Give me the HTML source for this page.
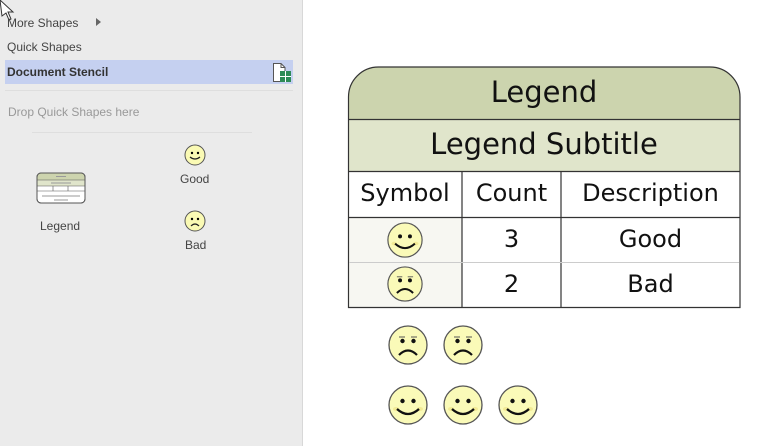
<!DOCTYPE html>
<html><head><meta charset="utf-8"><style>
*{margin:0;padding:0;box-sizing:border-box}
body{width:768px;height:446px;overflow:hidden;background:#fff;font-family:"Liberation Sans",sans-serif;position:relative}
#panel{position:absolute;left:0;top:0;width:303px;height:446px;background:#ebebeb;border-right:1px solid #d8d8d8}
.t{position:absolute;font-size:12px;color:#444;white-space:nowrap}
.abs{position:absolute}
.cell{position:absolute;font-family:"DejaVu Sans","Liberation Sans",sans-serif;color:#111;text-align:center;white-space:nowrap}
</style></head><body>
<div id="panel">
<svg class="abs" style="left:0;top:0" width="20" height="22"><path d="M0 0 L13 12 L8 12 L11 19 L9 20 L6 13 L2 16 Z" fill="#fff" stroke="#333" stroke-width="1"/></svg>
<div class="t" style="left:7px;top:16px">More Shapes</div>
<svg class="abs" style="left:95px;top:17px" width="8" height="10"><path d="M1 1 L6 5 L1 9Z" fill="#666"/></svg>
<div class="t" style="left:7px;top:40px">Quick Shapes</div>
<div class="abs" style="left:5px;top:60px;width:288px;height:24px;background:#c5d0f0"></div>
<div class="t" style="left:7px;top:65px;font-weight:bold;color:#333">Document Stencil</div>
<svg class="abs" style="left:272px;top:62px" width="20" height="21"><path d="M1.5 1.5 H9 L13 5.5 V19.5 H1.5Z" fill="#fff" stroke="#555"/><path d="M9 1.5 V5.5 H13" fill="none" stroke="#555"/><rect x="8" y="9" width="11" height="11" fill="#2e8b57"/><path d="M8 14.5H19M13.5 9V20" stroke="#fff"/></svg>
<div class="abs" style="left:5px;top:90px;width:288px;height:1px;background:#dedede"></div>
<div class="t" style="left:8px;top:105px;color:#999">Drop Quick Shapes here</div>
<div class="abs" style="left:32px;top:132px;width:220px;height:1px;background:#dedede"></div>
<svg class="abs" style="left:36px;top:172px" width="50" height="32"><rect x="1" y="1" width="48" height="30" rx="4" fill="#fff" stroke="#555"/><path d="M1 8 V5 a4 4 0 0 1 4-4 H45 a4 4 0 0 1 4 4 V8Z" fill="#cdd4ae"/><rect x="1" y="8" width="48" height="6" fill="#e0e5cb"/><path d="M1 8H49M1 14H49M1 19H49M17 14V19M32 14V19" stroke="#555" stroke-width=".6"/><rect x="1" y="1" width="48" height="30" rx="4" fill="none" stroke="#555"/><path d="M20 4.5H30M15 11H35M6 24H44M18 28H32" stroke="#999" stroke-width="1"/></svg>
<div class="t" style="left:40px;top:219px">Legend</div>
<svg class="abs" style="left:184px;top:144px" width="22" height="22"><circle cx="11" cy="11" r="10" fill="#fafab4" stroke="#555"/><circle cx="8" cy="9" r="1.2"/><circle cx="14" cy="9" r="1.2"/><path d="M6 13 Q11 17 16 13" fill="none" stroke="#222" stroke-width="1.2"/></svg>
<div class="t" style="left:180px;top:172px">Good</div>
<svg class="abs" style="left:184px;top:210px" width="22" height="22"><circle cx="11" cy="11" r="10" fill="#fafab4" stroke="#555"/><circle cx="8" cy="9" r="1.2"/><circle cx="14" cy="9" r="1.2"/><path d="M7 16 Q11 12 15 16" fill="none" stroke="#222" stroke-width="1.2"/></svg>
<div class="t" style="left:185px;top:238px">Bad</div>
</div>

<svg class="abs" style="left:0;top:0" width="768" height="446">
<defs>
<g id="happy"><circle r="19" fill="#fafab8" stroke="#555" stroke-width="1.3"/><circle cx="-5.5" cy="-4" r="2.2" fill="#111"/><circle cx="5.5" cy="-4" r="2.2" fill="#111"/><ellipse cx="-12" cy="4" rx="3" ry="2" fill="#f0e68c" opacity=".8"/><ellipse cx="12" cy="4" rx="3" ry="2" fill="#f0e68c" opacity=".8"/><path d="M-11 4 Q0 14 11 4" fill="none" stroke="#111" stroke-width="2.2"/></g>
<g id="sad"><circle r="19" fill="#fafab8" stroke="#555" stroke-width="1.3"/><circle cx="-5.5" cy="-4" r="2.2" fill="#111"/><circle cx="5.5" cy="-4" r="2.2" fill="#111"/><path d="M-9 -8H-3M3 -8H9" stroke="#555" stroke-width="1"/><path d="M-9 10 Q0 1 9 10" fill="none" stroke="#111" stroke-width="2.2"/></g>
</defs>
<path d="M348.5 119 V97 a30 30 0 0 1 30-30 H710 a30 30 0 0 1 30 30 V119Z" fill="#ccd4ae"/>
<rect x="348.5" y="119" width="391" height="52" fill="#e0e5cb"/>
<rect x="348.5" y="217" width="113" height="90" fill="#f7f7f2"/>
<path d="M348.5 119 V97 a30 30 0 0 1 30-30 H710 a30 30 0 0 1 30 30 V307.5 H348.5Z" fill="none" stroke="#333" stroke-width="1.2"/>
<path d="M348 119.5H740M348 171.5H740M348 217.5H740" stroke="#333" stroke-width="1.2"/>
<path d="M462 171V307M561 171V307" stroke="#333" stroke-width="1.2"/>
<path d="M349 262.5H739" stroke="#ccc" stroke-width="1"/>
<g transform="translate(405,240) scale(0.9)"><use href="#happy"/></g>
<g transform="translate(405,284) scale(0.9)"><use href="#sad"/></g>
<use href="#sad" x="408" y="345"/><use href="#sad" x="463" y="345"/>
<use href="#happy" x="408" y="405"/><use href="#happy" x="463" y="405"/><use href="#happy" x="518" y="405"/>
</svg>
<div class="cell" style="left:348px;top:75px;width:392px;font-size:29px">Legend</div>
<div class="cell" style="left:348px;top:127px;width:392px;font-size:29px">Legend Subtitle</div>
<div class="cell" style="left:348px;top:179px;width:114px;font-size:24px">Symbol</div>
<div class="cell" style="left:462px;top:179px;width:99px;font-size:24px">Count</div>
<div class="cell" style="left:561px;top:179px;width:179px;font-size:24px">Description</div>
<div class="cell" style="left:462px;top:225px;width:99px;font-size:24px">3</div>
<div class="cell" style="left:561px;top:225px;width:179px;font-size:24px">Good</div>
<div class="cell" style="left:462px;top:270px;width:99px;font-size:24px">2</div>
<div class="cell" style="left:561px;top:270px;width:179px;font-size:24px">Bad</div>
</body></html>
